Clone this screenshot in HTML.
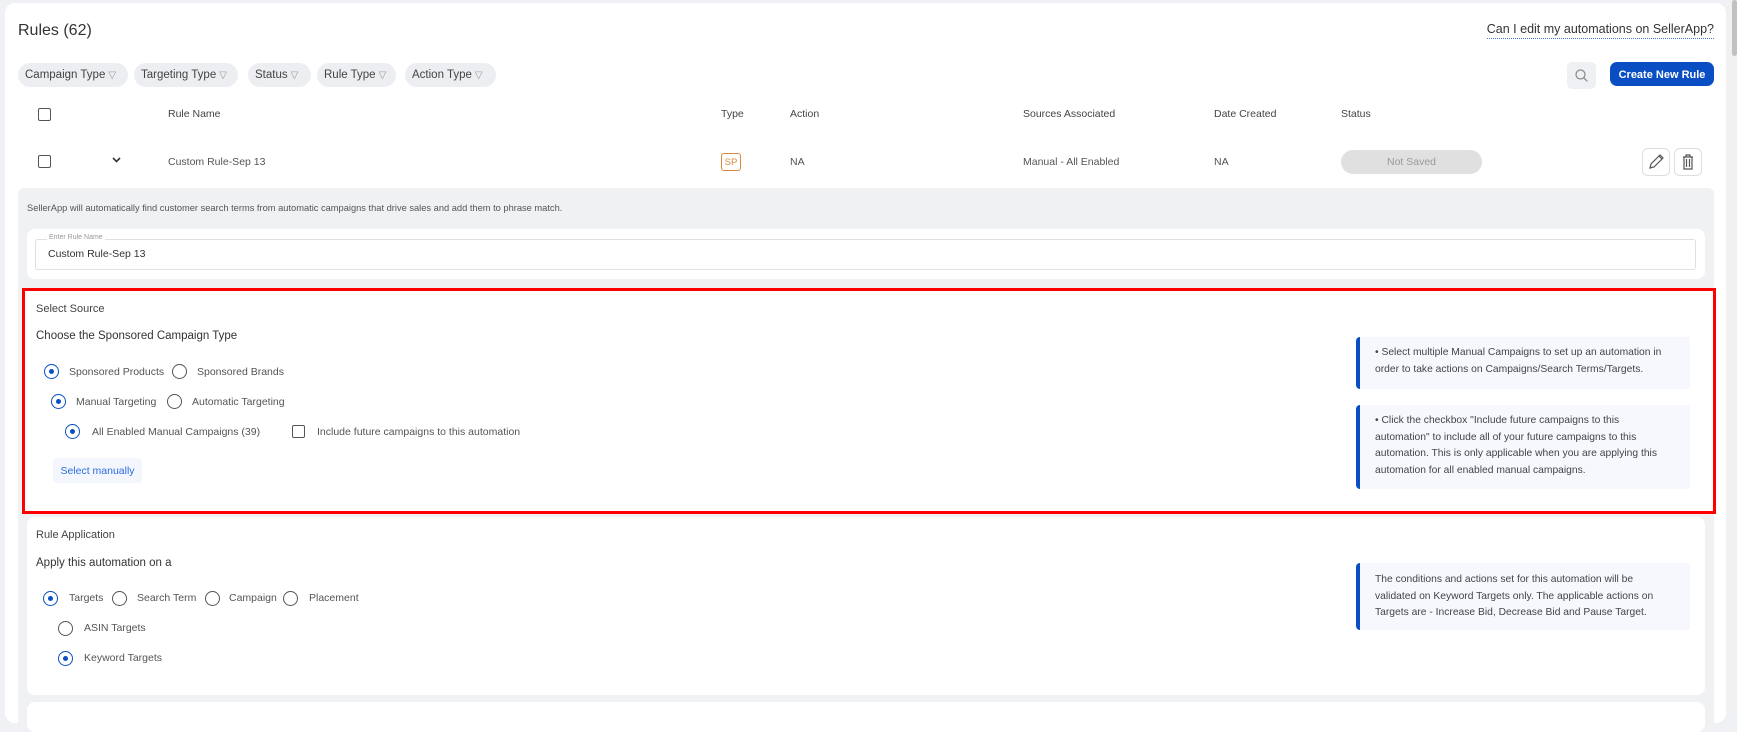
<!DOCTYPE html>
<html><head><meta charset="utf-8"><style>
*{box-sizing:border-box;margin:0;padding:0}
body{width:1737px;height:711px;overflow:hidden;background:#f0f1f4;font-family:"Liberation Sans",sans-serif;color:#444;position:relative}
.a{position:absolute;white-space:nowrap}
.card{position:absolute;left:5px;top:3px;width:1721px;height:720px;background:#fff;border-radius:10px}
.chip{position:absolute;top:63px;height:24px;background:#eceef1;border-radius:12px;font-size:11.5px;color:#444;line-height:24px;padding-left:7px;white-space:nowrap}
.chip i{font-style:normal;color:#999;font-size:10px;margin-left:3px}
.cb{position:absolute;width:13px;height:13px;border:1.3px solid #555;border-radius:2px;background:#fff}
.th{position:absolute;top:108px;font-size:10.5px;color:#444;white-space:nowrap}
.td{position:absolute;top:156px;font-size:10.5px;color:#555;white-space:nowrap}
.r{position:absolute;width:15px;height:15px;border:1.3px solid #555;border-radius:50%;background:#fff}
.r.on{border-color:#0a4ec4}
.r.on::after{content:"";position:absolute;left:3.5px;top:3.5px;width:5.5px;height:5.5px;border-radius:50%;background:#0a4ec4}
.l{position:absolute;font-size:10.5px;color:#555;line-height:15px;white-space:nowrap}
.info{position:absolute;left:1356px;width:334px;background:#f6f8fd;border-left:4px solid #0a4ec4;border-radius:4px 0 0 4px;font-size:10.3px;color:#444;line-height:16.6px;padding:8px 10px 0 15px;white-space:nowrap}
.flex{display:flex;align-items:center;justify-content:center}
</style></head><body>
<div class="card"></div>
<div style="position:absolute;right:0;top:0;width:10px;height:711px;background:#f1f1f1"></div>
<div style="position:absolute;left:1732px;top:0;width:5px;height:56px;background:#c1c1c1;border-radius:3px"></div>

<div class="a" style="left:18px;top:22px;font-size:16px;color:#333">Rules (62)</div>
<div class="a" style="right:23px;top:22px;font-size:12.5px;color:#333;border-bottom:1.5px dotted #3a7bd5;padding-bottom:2px">Can I edit my automations on SellerApp?</div>

<div class="chip" style="left:18px;width:110px">Campaign Type<i>▽</i></div>
<div class="chip" style="left:134px;width:104px">Targeting Type<i>▽</i></div>
<div class="chip" style="left:248px;width:63px">Status<i>▽</i></div>
<div class="chip" style="left:317px;width:79px">Rule Type<i>▽</i></div>
<div class="chip" style="left:405px;width:91px">Action Type<i>▽</i></div>

<div style="position:absolute;left:1567px;top:62px;width:29px;height:27px;background:#eef0f4;border-radius:5px">
<svg width="29" height="27" viewBox="0 0 29 27"><circle cx="13.5" cy="12.5" r="4.5" fill="none" stroke="#888" stroke-width="1.2"/><path d="M16.8 15.8l3.5 3.5" stroke="#888" stroke-width="1.2"/></svg></div>
<div class="a flex" style="left:1610px;top:62px;width:104px;height:24px;background:#0a4ec4;border-radius:7px;color:#fff;font-size:11px;font-weight:bold;padding-top:2px">Create New Rule</div>

<div class="cb" style="left:38px;top:108px"></div>
<div class="th" style="left:168px">Rule Name</div>
<div class="th" style="left:721px">Type</div>
<div class="th" style="left:790px">Action</div>
<div class="th" style="left:1023px">Sources Associated</div>
<div class="th" style="left:1214px">Date Created</div>
<div class="th" style="left:1341px">Status</div>

<div class="cb" style="left:38px;top:155px"></div>
<svg class="a" style="left:111px;top:156px" width="11" height="8" viewBox="0 0 11 8"><path d="M2 2l3.5 3.5L9 2" fill="none" stroke="#333" stroke-width="1.6"/></svg>
<div class="td" style="left:168px">Custom Rule-Sep 13</div>
<div class="a flex" style="left:721px;top:153px;width:20px;height:18px;border:1px solid #d9893c;border-radius:3px;color:#d9893c;font-size:9.5px">SP</div>
<div class="td" style="left:790px">NA</div>
<div class="td" style="left:1023px">Manual - All Enabled</div>
<div class="td" style="left:1214px">NA</div>
<div class="a flex" style="left:1341px;top:150px;width:141px;height:24px;background:#e0e0e0;border-radius:12px;color:#999;font-size:10.5px">Not Saved</div>
<div style="position:absolute;left:1642px;top:148px;width:28px;height:28px;border:1px solid #ddd;border-radius:6px">
<svg width="26" height="26" viewBox="0 0 26 26"><path d="M7 19l1-4 9-9 3 3-9 9z M16 7l3 3" fill="none" stroke="#555" stroke-width="1.2"/></svg></div>
<div style="position:absolute;left:1674px;top:148px;width:28px;height:28px;border:1px solid #ddd;border-radius:6px">
<svg width="26" height="26" viewBox="0 0 26 26"><path d="M8 8h10M11 8V6h4v2M9 8v12h8V8M11.5 10v8M14.5 10v8" fill="none" stroke="#555" stroke-width="1.2"/></svg></div>

<div style="position:absolute;left:18px;top:188px;width:1696px;height:540px;background:#f0f1f3;border-radius:6px"></div>
<div class="a" style="left:27px;top:203px;font-size:9.3px;color:#555">SellerApp will automatically find customer search terms from automatic campaigns that drive sales and add them to phrase match.</div>

<div style="position:absolute;left:27px;top:229px;width:1678px;height:50px;background:#fff;border-radius:8px"></div>
<div style="position:absolute;left:35px;top:239px;width:1661px;height:31px;border:1px solid #dde1e6;border-radius:3px"></div>
<div class="a" style="left:47px;top:234px;font-size:7px;color:#999;background:#fff;padding:0 2px">Enter Rule Name</div>
<div class="a" style="left:48px;top:248px;font-size:10.5px;color:#333">Custom Rule-Sep 13</div>

<div style="position:absolute;left:22px;top:288px;width:1694px;height:226px;border:3px solid #f00;background:#fff"></div>
<div class="a" style="left:36px;top:303px;font-size:11px;color:#444">Select Source</div>
<div class="a" style="left:36px;top:330px;font-size:11.5px;color:#333">Choose the Sponsored Campaign Type</div>
<div class="r on" style="left:44px;top:364px"></div><div class="l" style="left:69px;top:365px">Sponsored Products</div>
<div class="r" style="left:172px;top:364px"></div><div class="l" style="left:197px;top:365px">Sponsored Brands</div>
<div class="r on" style="left:51px;top:394px"></div><div class="l" style="left:76px;top:395px">Manual Targeting</div>
<div class="r" style="left:167px;top:394px"></div><div class="l" style="left:192px;top:395px">Automatic Targeting</div>
<div class="r on" style="left:65px;top:424px"></div><div class="l" style="left:92px;top:425px">All Enabled Manual Campaigns (39)</div>
<div class="cb" style="left:292px;top:425px"></div><div class="l" style="left:317px;top:425px">Include future campaigns to this automation</div>
<div class="a flex" style="left:53px;top:458px;width:89px;height:25px;background:#f3f6fc;border-radius:4px;color:#2a6de0;font-size:10.5px">Select manually</div>

<div class="info" style="top:337px;height:52px">• Select multiple Manual Campaigns to set up an automation in<br>order to take actions on Campaigns/Search Terms/Targets.</div>
<div class="info" style="top:405px;height:84px">• Click the checkbox "Include future campaigns to this<br>automation" to include all of your future campaigns to this<br>automation. This is only applicable when you are applying this<br>automation for all enabled manual campaigns.</div>

<div style="position:absolute;left:27px;top:517px;width:1678px;height:178px;background:#fff;border-radius:8px"></div>
<div class="a" style="left:36px;top:529px;font-size:11px;color:#444">Rule Application</div>
<div class="a" style="left:36px;top:557px;font-size:11.5px;color:#333">Apply this automation on a</div>
<div class="r on" style="left:43px;top:591px"></div><div class="l" style="left:69px;top:591px">Targets</div>
<div class="r" style="left:112px;top:591px"></div><div class="l" style="left:137px;top:591px">Search Term</div>
<div class="r" style="left:205px;top:591px"></div><div class="l" style="left:229px;top:591px">Campaign</div>
<div class="r" style="left:283px;top:591px"></div><div class="l" style="left:309px;top:591px">Placement</div>
<div class="r" style="left:58px;top:621px"></div><div class="l" style="left:84px;top:621px">ASIN Targets</div>
<div class="r on" style="left:58px;top:651px"></div><div class="l" style="left:84px;top:651px">Keyword Targets</div>
<div class="info" style="top:563px;height:67px;padding-top:9px">The conditions and actions set for this automation will be<br>validated on Keyword Targets only. The applicable actions on<br>Targets are - Increase Bid, Decrease Bid and Pause Target.</div>

<div style="position:absolute;left:27px;top:702px;width:1678px;height:30px;background:#fff;border-radius:8px"></div>
</body></html>
